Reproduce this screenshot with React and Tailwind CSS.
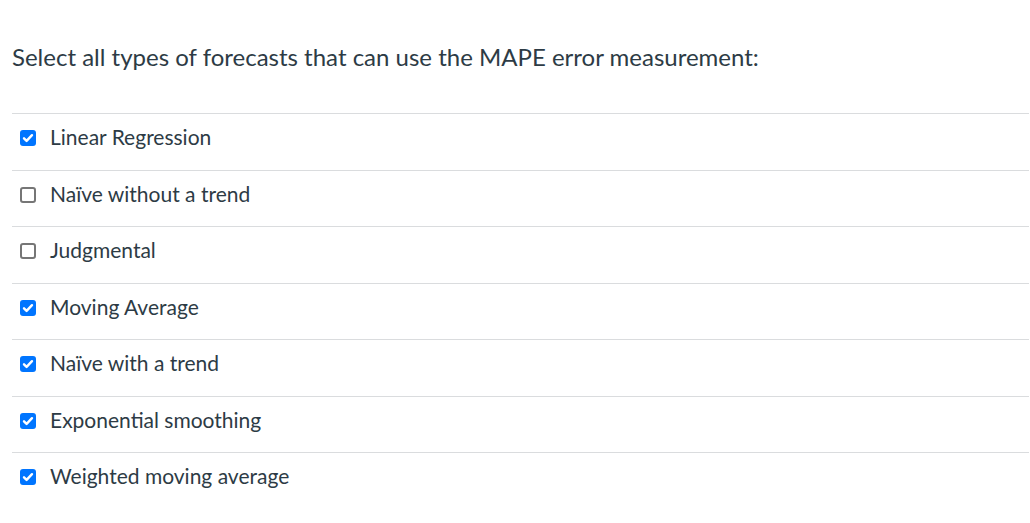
import React, { useState } from 'react';

const options = [
  { label: 'Linear Regression', checked: true },
  { label: 'Naïve without a trend', checked: false },
  { label: 'Judgmental', checked: false },
  { label: 'Moving Average', checked: true },
  { label: 'Naïve with a trend', checked: true },
  { label: 'Exponential smoothing', checked: true },
  { label: 'Weighted moving average', checked: true },
];

const Box = ({ checked }) =>
  checked ? (
    <span className="flex items-center justify-center w-4 h-4 rounded-[3px] bg-[#0075ff]">
      <svg viewBox="0 0 16 16" className="w-4 h-4" fill="none">
        <path d="M4 8.3l2.6 2.6L12 5.2" stroke="white" strokeWidth="2.4" strokeLinecap="round" strokeLinejoin="round" />
      </svg>
    </span>
  ) : (
    <span className="block w-4 h-4 rounded-[3px] border-2 border-[#767676] bg-white" />
  );

export default function App() {
  const [answers, setAnswers] = useState(options.map((o) => o.checked));

  const toggle = (i) => {
    setAnswers((prev) => prev.map((v, j) => (j === i ? !v : v)));
  };

  return (
    <div className="min-h-screen bg-white pl-3 pr-px text-[#2d3b45] font-['Lato',sans-serif]">
      <div className="pt-[42px] pb-[41px]">
        <p className="text-[24px] leading-[30px]">
          Select all types of forecasts that can use the MAPE error measurement:
        </p>
      </div>
      <div>
        {options.map((opt, i) => (
          <label
            key={opt.label}
            className="flex items-center h-[56.5px] border-t border-[#dadcde] pt-4 pb-[23.5px] cursor-pointer"
            onClick={(e) => {
              e.preventDefault();
              toggle(i);
            }}
          >
            <span className="ml-2 mr-[14px]">
              <Box checked={answers[i]} />
            </span>
            <span className="text-[21px] leading-4 -translate-y-px">{opt.label}</span>
          </label>
        ))}
      </div>
    </div>
  );
}
